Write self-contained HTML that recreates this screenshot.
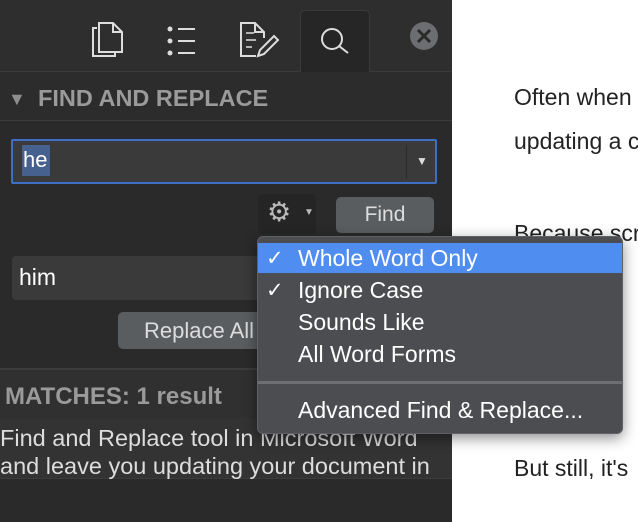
<!DOCTYPE html>
<html><head><style>
body{margin:0;width:638px;height:522px;overflow:hidden;position:relative;background:#fff;font-family:"Liberation Sans",sans-serif;}
.a{position:absolute;}
#side{left:0;top:0;width:452px;height:522px;background:#2a2a2a;}
.doc{color:#222;font-size:23px;left:514px;white-space:nowrap;}
.menu{left:257px;top:236px;width:366px;height:198px;background:#4b4d50;border-radius:6px;box-shadow:0 4px 14px rgba(0,0,0,.45);border:1px solid #5f6164;box-sizing:border-box;}
.mi{position:absolute;left:40px;color:#fff;font-size:23px;}
.ck{position:absolute;left:8px;color:#fff;font-size:21px;}
</style></head><body>
<div id="side" class="a"></div>
<div class="a" style="left:0;top:0;width:452px;height:71px;background:#2e2e2e;"></div>
<div class="a" style="left:0;top:71px;width:452px;height:1px;background:#3a3a3a;"></div>
<div class="a" style="left:300px;top:10px;width:70px;height:62px;background:#262626;border:1px solid #3a3a3a;border-bottom:none;border-radius:5px 5px 0 0;box-sizing:border-box;"></div>
<svg class="a" style="left:0;top:0" width="452" height="72">
<g fill="none" stroke="#ddd" stroke-width="2">
<path d="M97 28h-4v28h22v-4"/><path d="M99 23h14l9 9v20h-23z"/><path d="M113 23v9h9"/>
<path d="M178 29h17M178 41h17M178 53h17"/>
<path d="M256 56h-15V23h14l9 9v6"/><path d="M255 23v9h9"/><path d="M246 33h8M246 40h10M246 47h6" stroke-width="1.5"/>
<path d="M258 56l2-6 14-14 4 4-14 14z"/>
<circle cx="332" cy="39" r="10"/><path d="M339 46l9 7"/>
</g>
<g fill="#ddd"><circle cx="170" cy="29" r="2.5"/><circle cx="170" cy="41" r="2.5"/><circle cx="170" cy="53" r="2.5"/></g>
<circle cx="424" cy="36" r="14" fill="#6b6d70"/>
<path d="M418 30l12 12M430 30l-12 12" stroke="#2a2a2a" stroke-width="3"/>
</svg>
<div class="a" style="left:0;top:72px;width:452px;height:48px;background:#2c2c2c;border-bottom:1px solid #3c3c3c;"></div>
<div class="a" style="left:8px;top:89px;color:#8e8e8e;font-size:18px;">▼</div>
<div class="a" style="left:38px;top:85px;color:#9a9a9a;font-size:23.5px;font-weight:bold;white-space:nowrap;">FIND AND REPLACE</div>
<div class="a" style="left:11px;top:139px;width:426px;height:45px;background:#3a3a3a;border:2px solid #3f6fc4;box-sizing:border-box;border-radius:2px;"></div>
<div class="a" style="left:22px;top:145px;width:28px;height:31px;background:#47618f;"></div>
<div class="a" style="left:23px;top:147px;color:#fff;font-size:22px;">he</div>
<div class="a" style="left:406px;top:145px;width:1px;height:34px;background:#2a2a2a;"></div>
<div class="a" style="left:416px;top:154px;color:#ddd;font-size:12px;">▼</div>
<div class="a" style="left:258px;top:194px;width:58px;height:40px;background:#252525;border-radius:5px;"></div>
<div class="a" style="left:267px;top:197px;color:#bbb;font-size:27px;">⚙</div>
<div class="a" style="left:304px;top:207px;color:#bbb;font-size:10px;">▼</div>
<div class="a" style="left:336px;top:197px;width:98px;height:36px;background:#5a5d60;border-radius:5px;color:#ddd;font-size:21px;text-align:center;line-height:36px;">Find</div>
<div class="a" style="left:12px;top:256px;width:260px;height:44px;background:#3a3a3a;border-radius:4px;"></div>
<div class="a" style="left:19px;top:264px;color:#fff;font-size:23px;">him</div>
<div class="a" style="left:118px;top:312px;width:160px;height:37px;background:#5a5d60;border-radius:5px;color:#ddd;font-size:22px;line-height:37px;padding-left:26px;box-sizing:border-box;white-space:nowrap;overflow:hidden;">Replace All</div>
<div class="a" style="left:0;top:368px;width:452px;height:2px;background:#3c3c3c;"></div>
<div class="a" style="left:0;top:370px;width:452px;height:48px;background:#303030;"></div>
<div class="a" style="left:5px;top:383px;color:#9a9a9a;font-size:24px;font-weight:bold;white-space:nowrap;">MATCHES: 1 result</div>
<div class="a" style="left:0;top:418px;width:452px;height:60px;background:#333;border-bottom:1px solid #3c3c3c;"></div>
<div class="a" style="left:0;top:424px;color:#ddd;font-size:23.5px;line-height:28px;white-space:nowrap;">Find and Replace tool in Microsoft Word<br>and leave you updating your document in</div>
<div class="a doc" style="top:84px;">Often when</div>
<div class="a doc" style="top:128px;">updating a c</div>
<div class="a doc" style="top:220px;">Because scre</div>
<div class="a doc" style="top:262px;">d</div>
<div class="a doc" style="top:364px;">e</div>
<div class="a doc" style="top:408px;">o</div>
<div class="a doc" style="top:455px;">But still, it's</div>
<div class="a menu">
<div class="a" style="left:0;top:6px;width:364px;height:30px;background:#4f8ef0;"></div>
<div class="ck" style="top:9px;">✓</div><div class="mi" style="top:8px;">Whole Word Only</div>
<div class="ck" style="top:41px;">✓</div><div class="mi" style="top:40px;">Ignore Case</div>
<div class="mi" style="top:72px;">Sounds Like</div>
<div class="mi" style="top:104px;">All Word Forms</div>
<div class="a" style="left:0;top:144px;width:364px;height:3px;background:#6d6f72;"></div>
<div class="mi" style="top:160px;">Advanced Find &amp; Replace...</div>
</div>
</body></html>
